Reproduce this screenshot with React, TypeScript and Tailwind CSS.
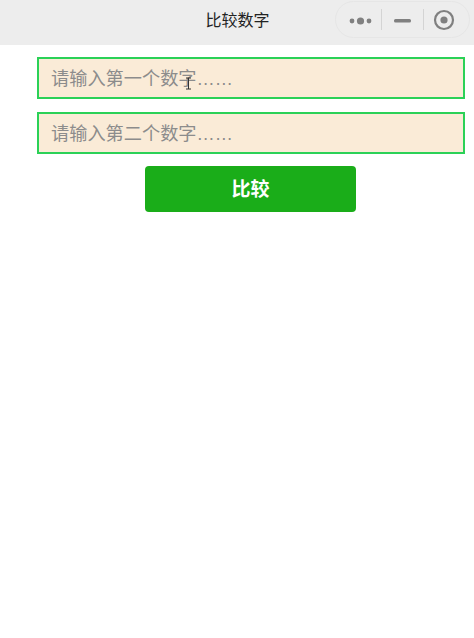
export default function App() {
  const font = { fontFamily: '"Liberation Sans", "Noto Sans CJK SC", sans-serif' };
  return (
    <div className="w-[474px] h-[638px] bg-white overflow-hidden relative" style={font}>
      <div className="h-[45px] bg-[#ededed] flex items-start relative">
        <div className="w-full text-center text-[16px] leading-[42px] text-[#222] pl-[1px]">比较数字</div>
        <div className="absolute left-[335px] top-[1px] w-[135px] h-[37px] rounded-full border border-[#e6e6e6] flex items-center">
          <svg width="45" height="35" viewBox="0 0 45 35">
            <circle cx="16" cy="19" r="2.4" fill="#808080" />
            <circle cx="24.5" cy="19" r="3.6" fill="#808080" />
            <circle cx="33" cy="19" r="2.4" fill="#808080" />
          </svg>
          <div className="w-px h-[21px] bg-[#d4d4d4]" />
          <svg width="41" height="35" viewBox="0 0 41 35">
            <rect x="12" y="17" width="17" height="3.4" rx="1.5" fill="#808080" />
          </svg>
          <div className="w-px h-[21px] bg-[#d4d4d4]" />
          <svg width="42" height="35" viewBox="0 0 42 35">
            <circle cx="20" cy="18" r="9" fill="none" stroke="#808080" strokeWidth="2.2" />
            <circle cx="20" cy="18" r="3.6" fill="#808080" />
          </svg>
        </div>
      </div>
      <div className="flex flex-col items-center pl-[37px] pr-[9px] pt-[12px]">
        <div className="relative w-full h-[42px] border-2 border-[#2bd157] bg-[#faebd7] flex items-center pl-[12px] pt-[3px] text-[18.2px] text-[#8c8c8c]">
          请输入第一个数字……
          <svg className="absolute left-[146px] top-[18px]" width="7" height="14" viewBox="0 0 7 14">
            <path d="M1 1h5M3.5 1v11M1 12h5" stroke="#333" strokeWidth="1" fill="none" />
          </svg>
        </div>
        <div className="w-full h-[42px] mt-[13px] border-2 border-[#2bd157] bg-[#faebd7] flex items-center pl-[12px] pt-[3px] text-[18.2px] text-[#8c8c8c]">
          请输入第二个数字……
        </div>
        <div className="self-start ml-[108px] w-[211px] h-[46px] mt-[12px] rounded-[4px] bg-[#1aad19] flex items-center justify-center pt-[3px] text-white font-bold text-[19px]">
          比较
        </div>
      </div>
    </div>
  );
}
